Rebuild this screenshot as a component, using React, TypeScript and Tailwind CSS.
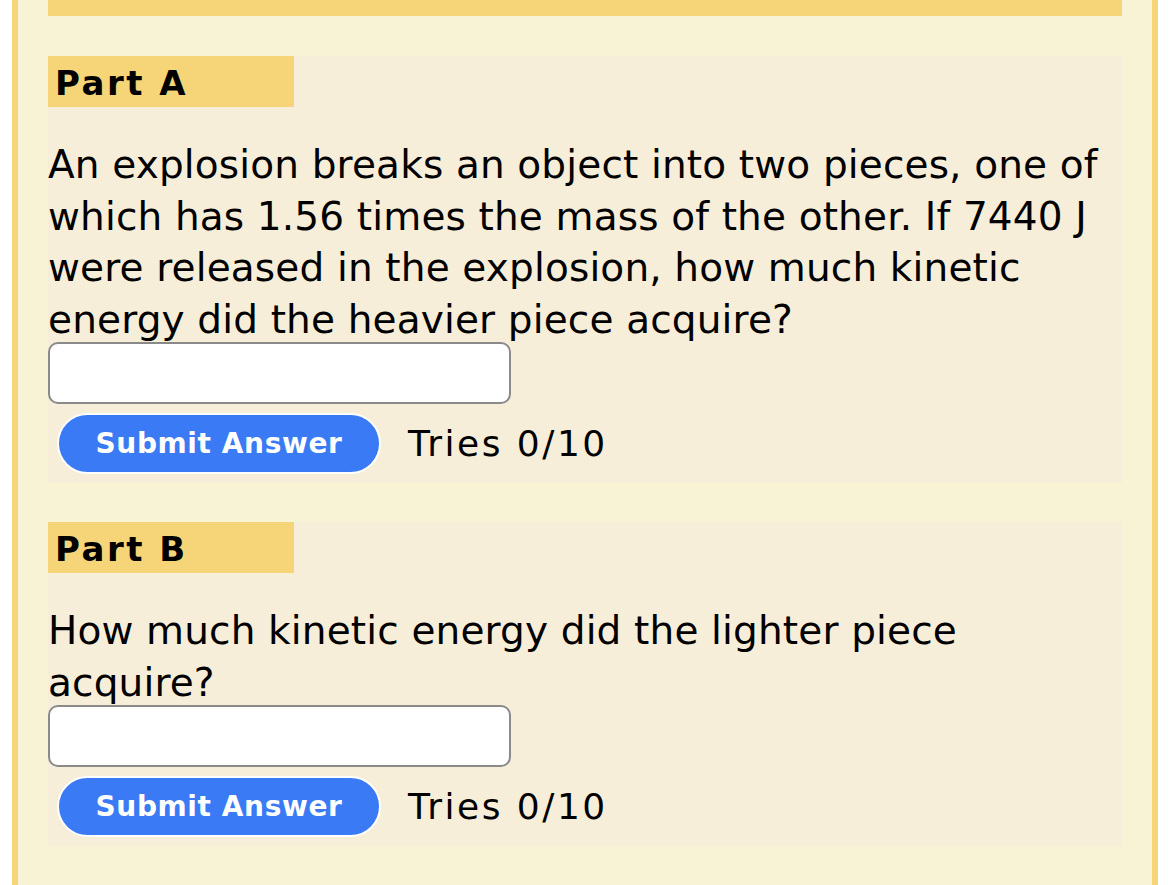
const questions = [
  {
    part: "Part A",
    text: "An explosion breaks an object into two pieces, one of which has 1.56 times the mass of the other. If 7440 J were released in the explosion, how much kinetic energy did the heavier piece acquire?",
  },
  {
    part: "Part B",
    text: "How much kinetic energy did the lighter piece acquire?",
  },
];

function PartSection({ part, text }: { part: string; text: string }) {
  return (
    <section className="bg-[#F7EED9] pb-[9px]">
      <div className="flex h-[51px] w-[246px] items-center bg-[#F6D578] px-[7px] pt-[3px]">
        <h2 className="text-[34px] font-bold leading-none tracking-[2.5px] text-black">{part}</h2>
      </div>
      <p className="mt-[32px] pr-4 text-[39px] leading-[51.5px] tracking-[0.15px] text-black">{text}</p>
      <div className="-mt-[3px]">
        <input
          type="text"
          className="h-[62px] w-[463px] rounded-[10px] border-2 border-[#8A8A8A] bg-white px-3 text-[34px] outline-none"
        />
      </div>
      <div className="mt-[9px] flex items-center gap-[27px] pl-[9px]">
        <button className="h-[61px] w-[324px] rounded-full border-2 border-white bg-[#3A7BF5] text-[28px] font-bold tracking-[0.6px] text-white">
          Submit Answer
        </button>
        <span className="text-[36px] tracking-[2.5px] text-black">Tries 0/10</span>
      </div>
    </section>
  );
}

export default function App() {
  return (
    <div className="min-h-screen bg-white font-['DejaVu_Sans','Verdana',sans-serif]">
      <div className="ml-[12px] h-[885px] w-[1146px] border-x-[6px] border-[#F6D578] bg-[#F9F3D6] px-[30px]">
        <div className="h-4 bg-[#F6D578]" />
        <div className="mt-10 flex flex-col gap-[39px]">
          {questions.map((q) => (
            <PartSection key={q.part} part={q.part} text={q.text} />
          ))}
        </div>
      </div>
    </div>
  );
}
